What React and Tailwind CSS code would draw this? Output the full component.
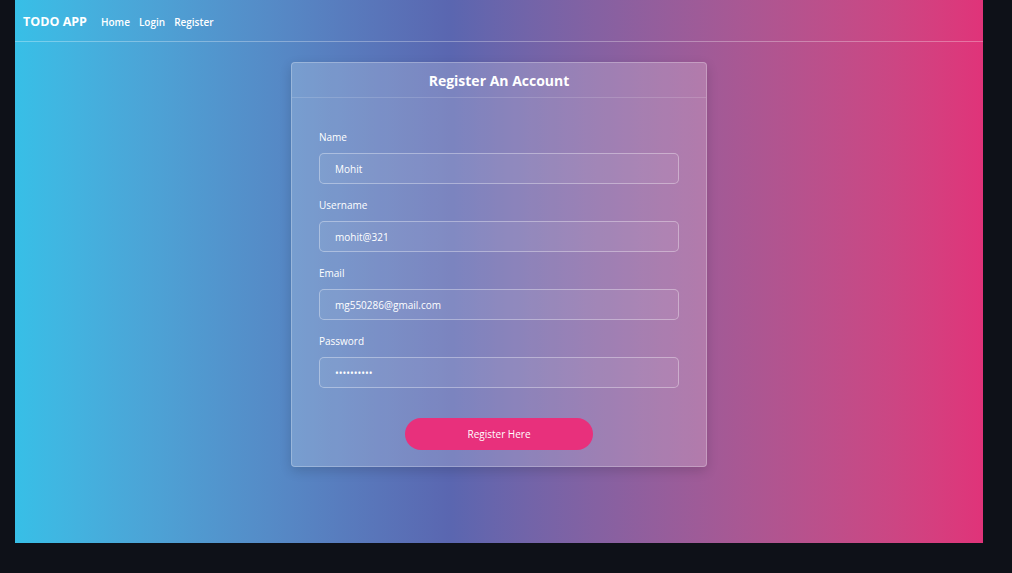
import React from 'react'

const fields = [
  { label: 'Name', value: 'Mohit', type: 'text' },
  { label: 'Username', value: 'mohit@321', type: 'text' },
  { label: 'Email', value: 'mg550286@gmail.com', type: 'email' },
  { label: 'Password', value: 'abcdefghij', type: 'password' },
]

const Navbar = () => (
  <nav className="flex h-[42px] items-center gap-[14px] border-b border-white/30 px-[8px] pt-[3px] text-white">
    <span className="text-[12.5px] font-bold">TODO APP</span>
    <div className="flex items-center gap-[9px] text-[10px] font-semibold">
      <a href="#">Home</a>
      <a href="#">Login</a>
      <a href="#">Register</a>
    </div>
  </nav>
)

const Field = ({ label, value, type }) => (
  <div className="flex flex-col">
    <label className="h-[16px] text-[10px] leading-[16px] text-white">{label}</label>
    <input
      type={type}
      defaultValue={value}
      className="mt-[8px] h-[31px] w-full rounded-[5px] border border-white/35 bg-white/5 px-[15px] text-[10px] text-white outline-none"
    />
  </div>
)

export default function App() {
  return (
    <div
      className="h-[573px] w-[1012px] overflow-hidden bg-[#0e1118]"
      style={{ fontFamily: '"Open Sans", "Noto Sans", sans-serif' }}
    >
      <div className="ml-[15px] h-[543px] w-[968px] bg-gradient-to-r from-[#37bfe7] via-[#5a66b0] via-45% to-[#e03379]">
        <Navbar />
        <div className="flex justify-center pt-[20px]">
          <div className="w-[416px] rounded-[4px] border border-white/25 bg-white/20 shadow-[0_4px_12px_rgba(0,0,0,0.15)]">
            <div className="flex h-[35px] items-center justify-center border-b border-white/15">
              <h1 className="text-[14px] font-bold text-white">Register An Account</h1>
            </div>
            <form className="flex flex-col gap-[13px] px-[27px] pt-[31px]">
              {fields.map((f) => (
                <Field key={f.label} {...f} />
              ))}
              <div className="flex justify-center pb-[16px] pt-[17px]">
                <button
                  type="button"
                  className="h-[32px] w-[188px] rounded-full bg-[#e8307c] text-[10px] text-white"
                >
                  Register Here
                </button>
              </div>
            </form>
          </div>
        </div>
      </div>
    </div>
  )
}
